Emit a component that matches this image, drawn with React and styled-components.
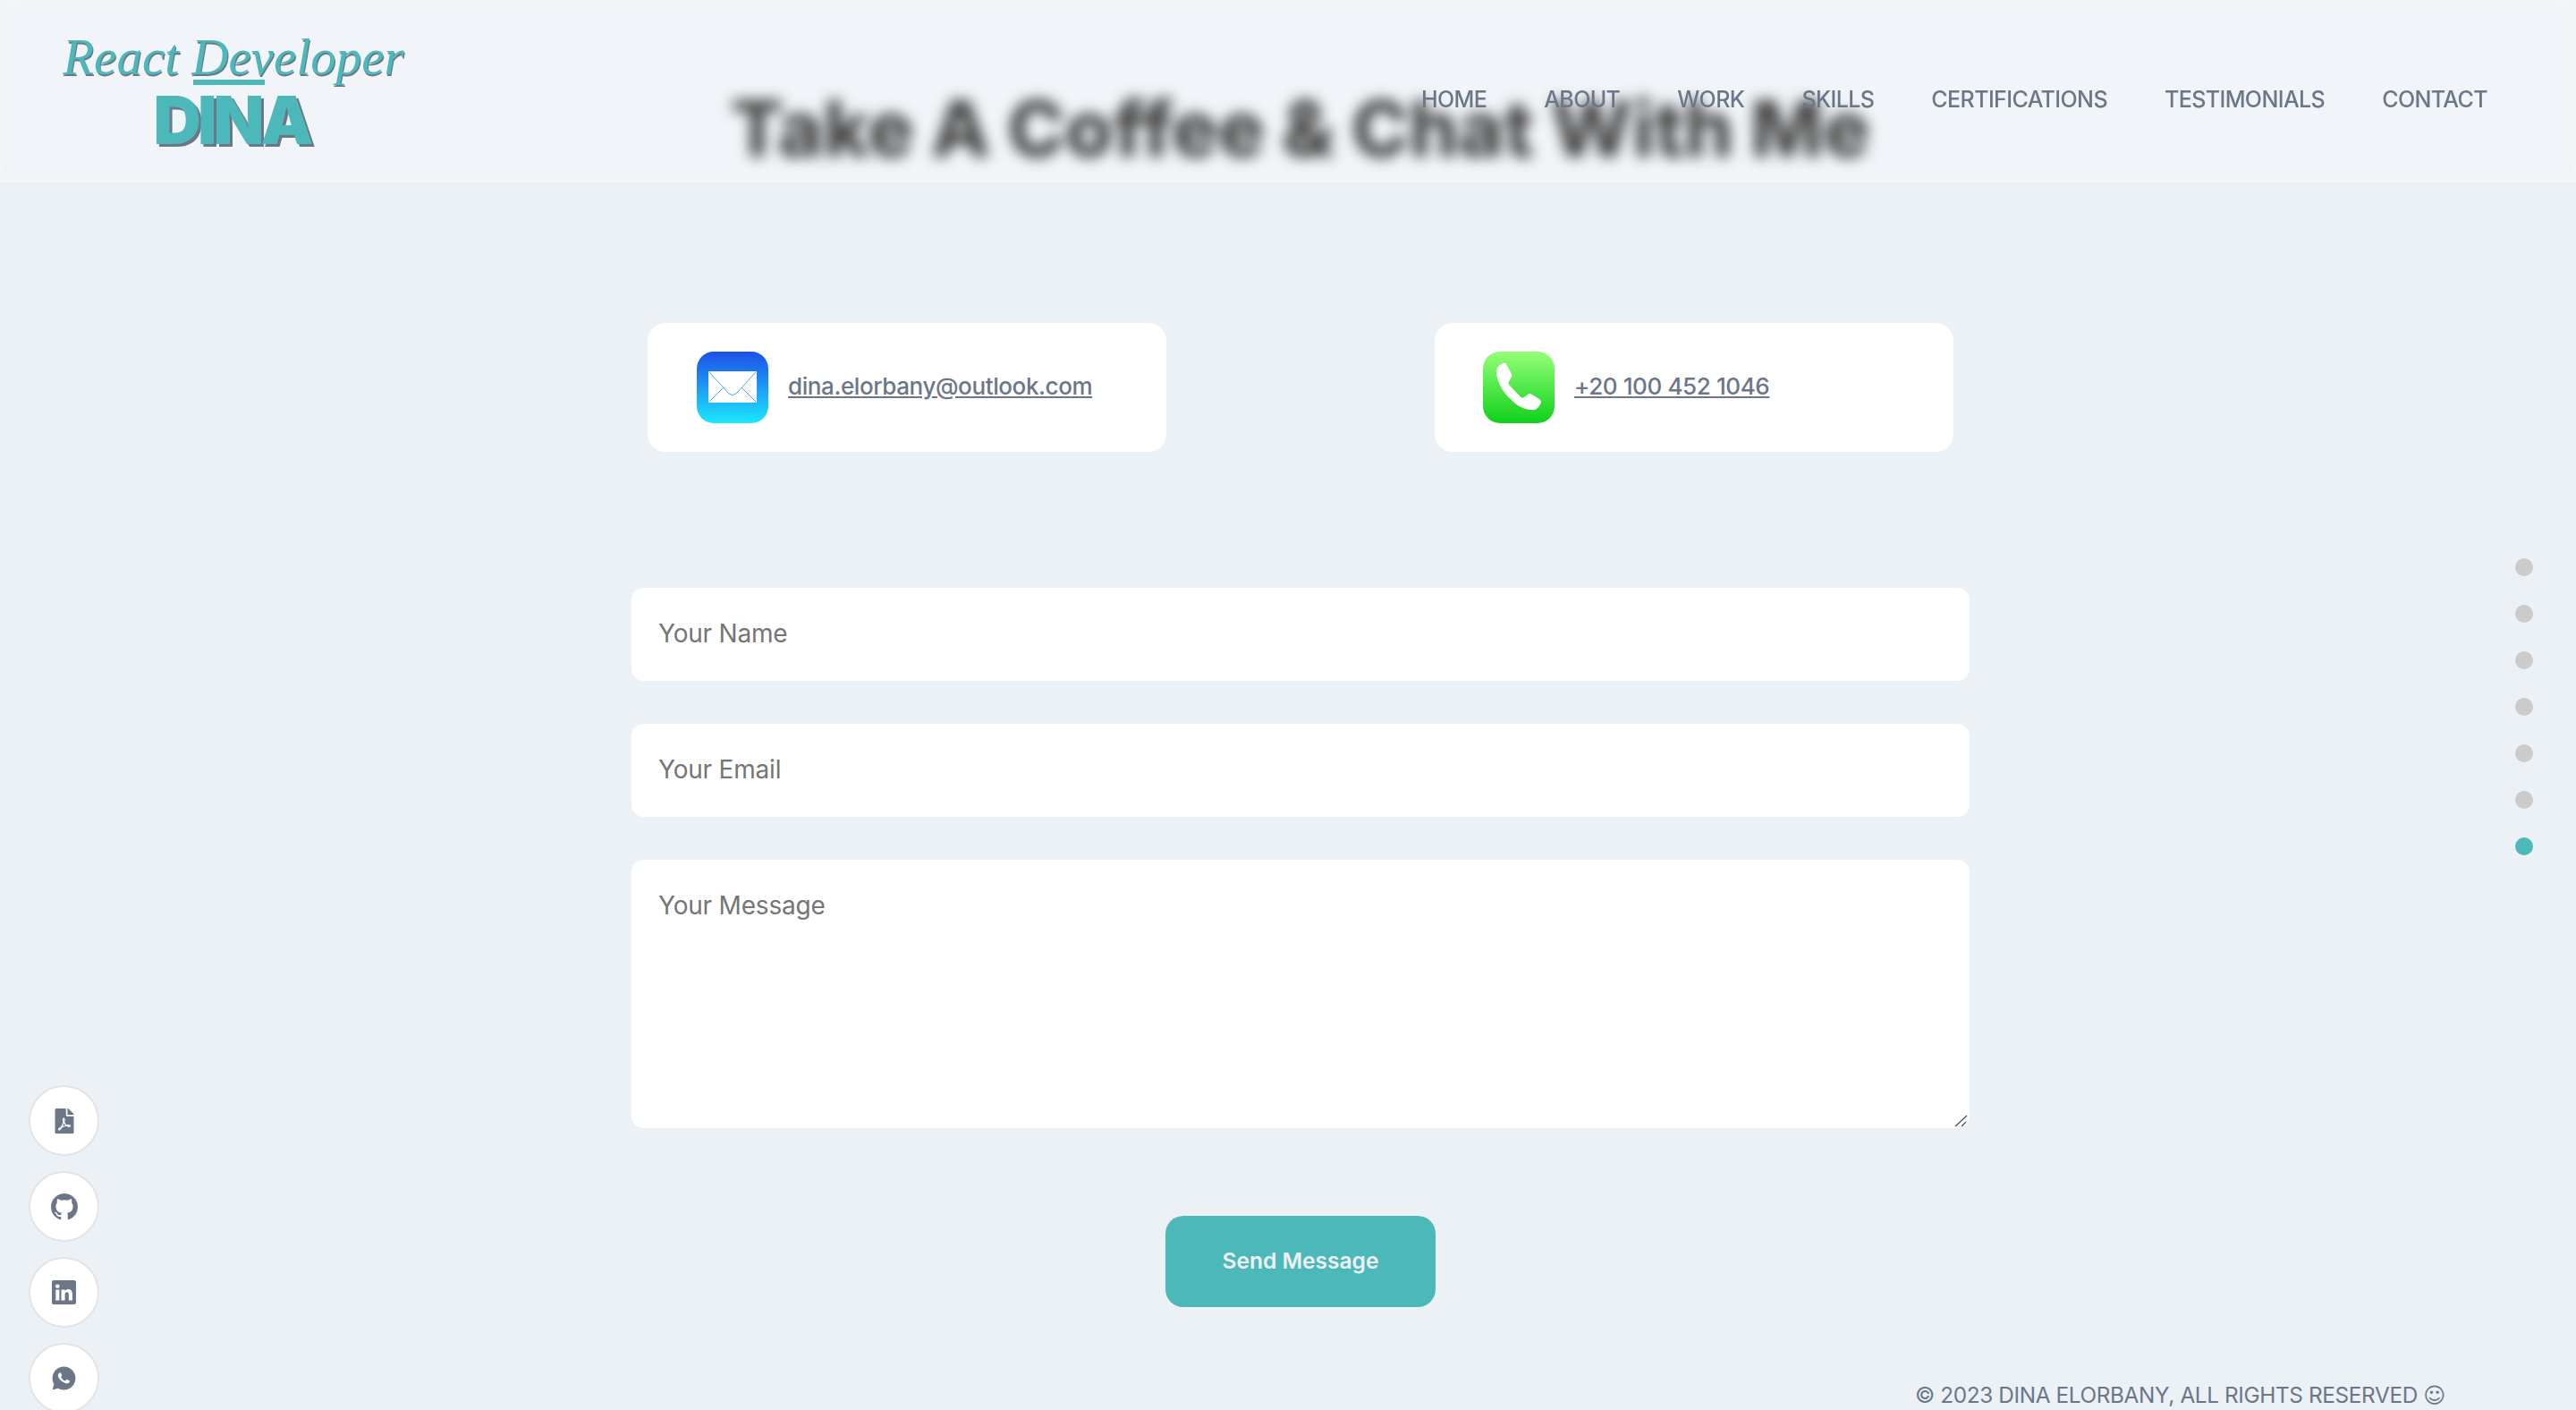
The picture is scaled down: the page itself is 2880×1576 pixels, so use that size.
import React from "react";
import styled, { createGlobalStyle } from "styled-components";
import { FaFilePdf } from "react-icons/fa";
import { BsGithub, BsLinkedin } from "react-icons/bs";
import { RiWhatsappFill } from "react-icons/ri";

const SANS = `Inter, "Noto Sans", sans-serif`;

const Global = createGlobalStyle`
  html, body { margin: 0; padding: 0; background: #ecf1f6; }
  * { box-sizing: border-box; }
`;

const Page = styled.div`
  width: 2880px;
  height: 1576px;
  overflow: hidden;
  position: relative;
  padding: 94px 0 0 28px;
  background: #ecf1f6;
  font-family: ${SANS};
  display: flex;
  flex-direction: column;
  align-items: center;
`;

const Nav = styled.nav`
  position: absolute;
  top: 0;
  left: 0;
  width: 100%;
  height: 204px;
  padding: 0 97px 0 67px;
  display: flex;
  align-items: center;
  justify-content: space-between;
  background: rgba(255, 255, 255, 0.25);
  backdrop-filter: blur(8px);
  border: 2px solid rgba(255, 255, 255, 0.18);
  z-index: 2;
`;

const Logo = styled.div`
  display: flex;
  flex-direction: column;
  align-items: center;
  gap: 10px;
  width: 384px;
  padding-bottom: 4px;
  color: #4cb8ba;
`;

const LogoLine = styled.div`
  font-family: "Liberation Serif", serif;
  font-style: italic;
  font-size: 57px;
  line-height: 58px;
  white-space: nowrap;
  text-shadow: 1px 2px 0 #6b7688;
`;

const LogoUnderlined = styled.span`
  position: relative;
  &::after {
    content: "";
    position: absolute;
    left: 2px;
    top: 57px;
    width: 80px;
    height: 6px;
    background: #4cb8ba;
  }
`;

const LogoName = styled.div`
  margin-right: 4px;
  font-family: ${SANS};
  font-weight: 900;
  font-size: 74px;
  line-height: 62px;
  letter-spacing: -4px;
  text-shadow: 3px 3px 0 #6b7688;
`;

const NavLinks = styled.ul`
  display: flex;
  gap: 64px;
  margin: 0;
  padding: 18px 0 0;
  list-style: none;
`;

const NavLink = styled.li`
  font-size: 25px;
  font-weight: 500;
  letter-spacing: -0.6px;
  color: #6b7688;
`;

const Title = styled.h2`
  margin: 0 0 167px;
  font-size: 86.6px;
  line-height: 100px;
  font-weight: 800;
  color: #030303;
  white-space: nowrap;
`;

const Cards = styled.div`
  width: 1460px;
  display: flex;
  justify-content: space-between;
`;

const Card = styled.div`
  width: 580px;
  height: 144px;
  padding-left: ${(p) => p.$inset}px;
  display: flex;
  align-items: center;
  gap: 22px;
  background: #fff;
  border-radius: 20px;
`;

const CardIcon = styled.svg`
  width: 80px;
  height: 80px;
  flex: none;
`;

const CardLink = styled.a`
  margin-top: -3px;
  font-size: 26px;
  font-weight: 500;
  letter-spacing: -0.4px;
  color: #6b7688;
  text-decoration: underline;
`;

const Form = styled.form`
  width: 1496px;
  margin-top: 152px;
  display: flex;
  flex-direction: column;
  align-items: center;
  gap: 48px;
`;

const fieldStyles = `
  width: 100%;
  display: block;
  border: 0;
  outline: 0;
  background: #fff;
  border-radius: 14px;
  padding: 0 30px;
  font-size: 28px;
  letter-spacing: -0.2px;
  font-family: ${SANS};
  color: #757575;
  &::placeholder { color: #757575; opacity: 1; }
`;

const Field = styled.input`
  ${fieldStyles}
  height: 104px;
  padding-bottom: 2px;
`;

const MessageBox = styled.div`
  position: relative;
  width: 100%;
`;

const MessageField = styled.textarea`
  ${fieldStyles}
  height: 300px;
  padding-top: 33px;
  line-height: 36px;
  resize: none;
`;

const ResizeGrip = styled.svg`
  position: absolute;
  right: 1px;
  bottom: 1px;
  width: 16px;
  height: 14px;
`;

const SendButton = styled.button`
  width: 302px;
  height: 102px;
  margin-top: 50px;
  padding-bottom: 3px;
  border: 0;
  border-radius: 20px;
  background: #4db8ba;
  color: #edf2f8;
  font-family: ${SANS};
  font-size: 24.5px;
  font-weight: 600;
`;

const Footer = styled.p`
  align-self: flex-end;
  margin: 82px 146px 0 0;
  font-size: 24.3px;
  line-height: 32px;
  letter-spacing: -0.35px;
  color: #6b7688;
  white-space: nowrap;
`;

const Smiley = styled.span`
  font-family: "DejaVu Sans", sans-serif;
  font-size: 24px;
`;

const SocialRail = styled.div`
  position: absolute;
  left: 32px;
  top: 1213px;
  display: flex;
  flex-direction: column;
  gap: 17px;
`;

const SocialButton = styled.div`
  width: 79px;
  height: 79px;
  border-radius: 50%;
  background: #fff;
  border: 2px solid #e3e4e6;
  color: #6b7688;
  display: flex;
  align-items: center;
  justify-content: center;
`;

const DotRail = styled.div`
  position: absolute;
  left: 2812px;
  top: 624px;
  display: flex;
  flex-direction: column;
  gap: 32px;
`;

const Dot = styled.span`
  width: 20px;
  height: 20px;
  border-radius: 50%;
  background: ${(p) => (p.$active ? "#4cb8ba" : "#cbcbcb")};
`;

const links = ["HOME", "ABOUT", "WORK", "SKILLS", "CERTIFICATIONS", "TESTIMONIALS", "CONTACT"];

const MailIcon = () => (
  <CardIcon viewBox="0 0 80 80">
    <defs>
      <linearGradient id="mailGrad" x1="0" y1="0" x2="0" y2="1">
        <stop offset="0" stopColor="#1d4fe8" />
        <stop offset="1" stopColor="#1be8ff" />
      </linearGradient>
    </defs>
    <rect width="80" height="80" rx="19" fill="url(#mailGrad)" />
    <rect x="13" y="22" width="54" height="35" rx="1" fill="#fff" />
    <path
      d="M14 23 L36 47 Q40 50 44 47 L66 23 M14 56 L30 40 M66 56 L50 40"
      fill="none"
      stroke="#4aa8ff"
      strokeWidth="1"
    />
  </CardIcon>
);

const PhoneIcon = () => (
  <CardIcon viewBox="0 0 80 80">
    <defs>
      <linearGradient id="phoneGrad" x1="0" y1="0" x2="0" y2="1">
        <stop offset="0" stopColor="#95ff78" />
        <stop offset="1" stopColor="#0fd01a" />
      </linearGradient>
    </defs>
    <rect width="80" height="80" rx="19" fill="url(#phoneGrad)" />
    <path
      d="M21 13.5 C18 15 15 18 15 23 C15 33 24 48 31 53 C38 62 50 66 58 65 C61 64 64 60 65 56.5 C65 55 64 54 63 53 L54 47.5 C52.5 46.5 51 47 50 48 L45 51.5 C44 52 43 51.5 42 50.5 L30 38 C28.5 36.5 28 35 29 33.5 L32 28 C32.5 27 32.5 26 32 25 L26 14 C25 12.5 23 12.5 21 13.5 Z"
      fill="#fff"
    />
  </CardIcon>
);

export default function App() {
  return (
    <Page>
      <Global />
      <Nav>
        <Logo>
          <LogoLine>
            React <LogoUnderlined>Dev</LogoUnderlined>eloper
          </LogoLine>
          <LogoName>DINA</LogoName>
        </Logo>
        <NavLinks>
          {links.map((l) => (
            <NavLink key={l}>{l}</NavLink>
          ))}
        </NavLinks>
      </Nav>

      <Title>Take A Coffee &amp; Chat With Me</Title>

      <Cards>
        <Card $inset={55}>
          <MailIcon />
          <CardLink href="#mail">dina.elorbany@outlook.com</CardLink>
        </Card>
        <Card $inset={54}>
          <PhoneIcon />
          <CardLink href="#phone">+20 100 452 1046</CardLink>
        </Card>
      </Cards>

      <Form onSubmit={(e) => e.preventDefault()}>
        <Field placeholder="Your Name" />
        <Field placeholder="Your Email" />
        <MessageBox>
          <MessageField placeholder="Your Message" />
          <ResizeGrip viewBox="0 0 16 14">
            <path d="M1 13 L14 1 M8 13 L13 8" stroke="#555" strokeWidth="1.4" fill="none" />
          </ResizeGrip>
        </MessageBox>
        <SendButton type="button">Send Message</SendButton>
      </Form>

      <Footer>
        © 2023 DINA ELORBANY, ALL RIGHTS RESERVED <Smiley>☺</Smiley>
      </Footer>

      <SocialRail>
        <SocialButton><FaFilePdf size={28} /></SocialButton>
        <SocialButton><BsGithub size={30} /></SocialButton>
        <SocialButton><BsLinkedin size={27} /></SocialButton>
        <SocialButton><RiWhatsappFill size={31} /></SocialButton>
      </SocialRail>

      <DotRail>
        {links.map((l, i) => (
          <Dot key={l} $active={i === links.length - 1} />
        ))}
      </DotRail>
    </Page>
  );
}
